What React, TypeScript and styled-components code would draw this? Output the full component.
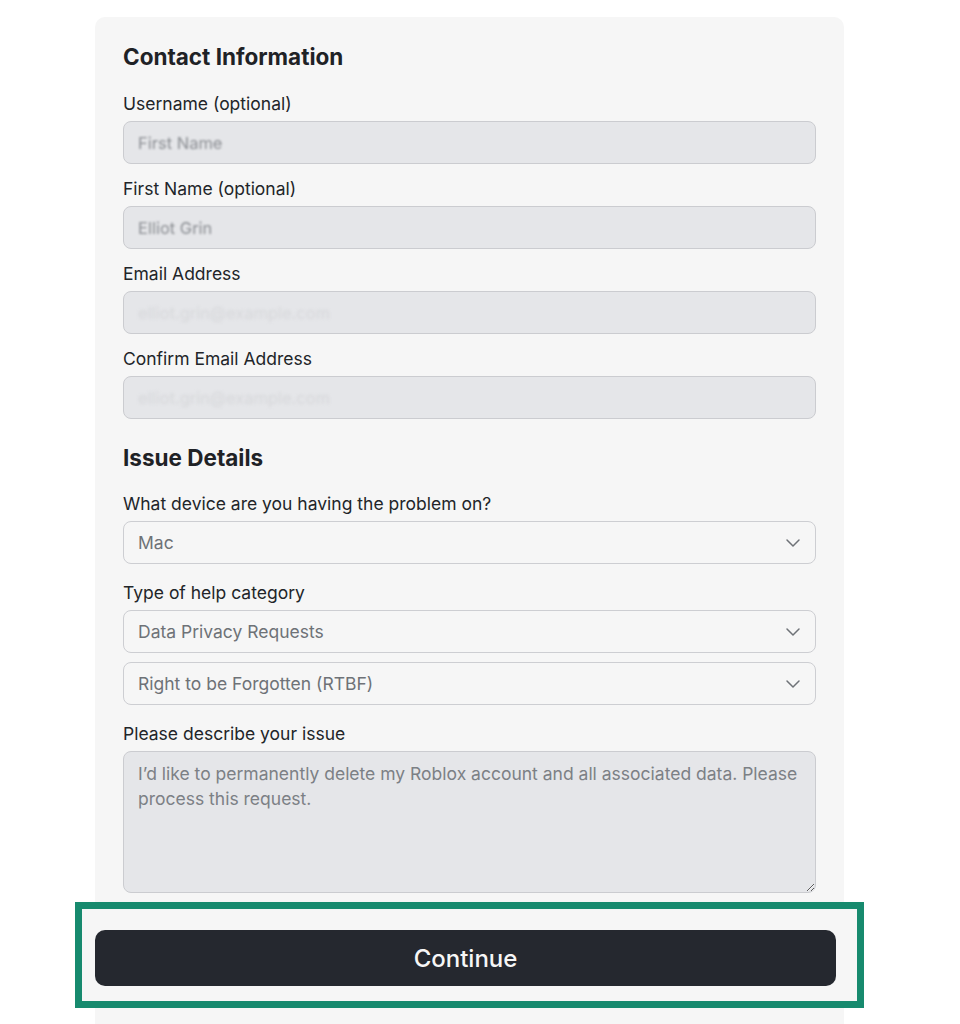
import React from "react";
import styled, { createGlobalStyle } from "styled-components";
import { ChevronDown } from "lucide-react";

const GlobalStyle = createGlobalStyle`
  html, body {
    margin: 0;
    padding: 0;
    background: #ffffff;
  }

  body {
    font-family: Inter, "Noto Sans", "Liberation Sans", sans-serif;
    color: #222529;
  }
`;

const Page = styled.div`
  width: 960px;
  min-height: 1024px;
  overflow: hidden;
`;

const Card = styled.form`
  width: 749px;
  box-sizing: border-box;
  margin: 17px 0 0 95px;
  padding: 26px 28px 40px;
  background: #f6f6f6;
  border-radius: 10px;
  display: flex;
  flex-direction: column;
`;

const SectionTitle = styled.h2<{ $spaced?: boolean }>`
  margin: ${(p) => (p.$spaced ? "12px 0 20px" : "0 0 21px")};
  font-size: 22.5px;
  line-height: 28px;
  font-weight: 700;
  color: #1f2226;
`;

const Field = styled.div<{ $gap?: number }>`
  display: flex;
  flex-direction: column;
  margin-bottom: ${(p) => p.$gap ?? 13}px;
`;

const Label = styled.label`
  font-size: 17.5px;
  line-height: 24px;
  margin-bottom: 5px;
  color: #222529;
`;

const LockedBox = styled.div`
  height: 43px;
  box-sizing: border-box;
  display: flex;
  align-items: center;
  padding: 0 14px;
  background: #e5e6e9;
  border: 1px solid #cbccd0;
  border-radius: 8px;
  overflow: hidden;
`;

const LockedInput = styled.input<{ $faint?: boolean }>`
  flex: 1;
  border: 0;
  padding: 0;
  background: transparent;
  font-family: inherit;
  font-size: 16.5px;
  color: ${(p) => (p.$faint ? "#d6d7da" : "#8a8d92")};
  filter: blur(${(p) => (p.$faint ? 1.6 : 0.8)}px);
  outline: none;
`;

const SelectWrap = styled.div<{ $gap?: number }>`
  position: relative;
  margin-bottom: ${(p) => p.$gap ?? 0}px;
`;

const Select = styled.select`
  width: 100%;
  height: 43px;
  box-sizing: border-box;
  appearance: none;
  padding: 0 40px 0 14px;
  background: #f6f6f6;
  border: 1px solid #cdced2;
  border-radius: 8px;
  font-family: inherit;
  font-size: 17.5px;
  color: #6e7277;
  outline: none;
`;

const Chevron = styled(ChevronDown)`
  position: absolute;
  right: 11px;
  top: 50%;
  margin-top: -12px;
  color: #6e7277;
  pointer-events: none;
`;

const TextArea = styled.textarea`
  height: 142px;
  box-sizing: border-box;
  padding: 9px 10px 9px 14px;
  background: #e5e6e9;
  border: 1px solid #cbccd0;
  border-radius: 8px;
  font-family: inherit;
  font-size: 17.5px;
  line-height: 25px;
  color: #7c8085;
  resize: vertical;
  outline: none;
`;

const Footer = styled.div`
  margin: 9px -48px 0;
  padding: 21px 21px 15px 13px;
  background: #f6f6f6;
  border: 7px solid #178a6e;
`;

const ContinueButton = styled.button`
  width: 100%;
  height: 56px;
  border: 0;
  border-radius: 10px;
  background: #25282f;
  color: #f6f6f6;
  font-family: inherit;
  font-size: 24px;
  font-weight: 500;
  cursor: pointer;
`;

const contactFields = [
  { label: "Username (optional)", value: "First Name" },
  { label: "First Name (optional)", value: "Elliot Grin" },
  { label: "Email Address", value: "elliot.grin@example.com", faint: true },
  { label: "Confirm Email Address", value: "elliot.grin@example.com", faint: true },
];

const issueText =
  "I\u2019d like to permanently delete my Roblox account and all associated data. Please process this request.";

const App: React.FC = () => {
  return (
    <>
      <GlobalStyle />
      <Page>
        <Card onSubmit={(e) => e.preventDefault()}>
          <SectionTitle>Contact Information</SectionTitle>
          {contactFields.map((f) => (
            <Field key={f.label}>
              <Label>{f.label}</Label>
              <LockedBox>
                <LockedInput readOnly value={f.value} $faint={f.faint} />
              </LockedBox>
            </Field>
          ))}

          <SectionTitle $spaced>Issue Details</SectionTitle>
          <Field $gap={17}>
            <Label>What device are you having the problem on?</Label>
            <SelectWrap>
              <Select defaultValue="mac">
                <option value="mac">Mac</option>
                <option value="windows">Windows</option>
              </Select>
              <Chevron size={24} strokeWidth={1.5} />
            </SelectWrap>
          </Field>

          <Field $gap={17}>
            <Label>Type of help category</Label>
            <SelectWrap $gap={9}>
              <Select defaultValue="privacy">
                <option value="privacy">Data Privacy Requests</option>
              </Select>
              <Chevron size={24} strokeWidth={1.5} />
            </SelectWrap>
            <SelectWrap>
              <Select defaultValue="rtbf">
                <option value="rtbf">Right to be Forgotten (RTBF)</option>
              </Select>
              <Chevron size={24} strokeWidth={1.5} />
            </SelectWrap>
          </Field>

          <Field $gap={0}>
            <Label>Please describe your issue</Label>
            <TextArea readOnly defaultValue={issueText} />
          </Field>

          <Footer>
            <ContinueButton type="submit">Continue</ContinueButton>
          </Footer>
        </Card>
      </Page>
    </>
  );
};

export default App;
